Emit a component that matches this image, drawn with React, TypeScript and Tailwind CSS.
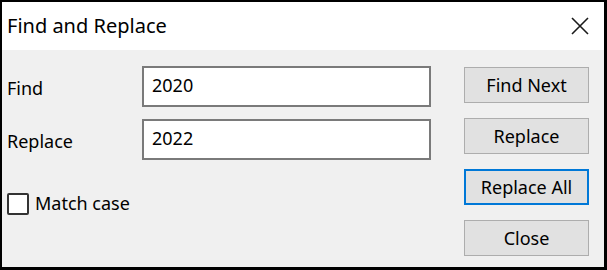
import React, { useState } from 'react';

const font = { fontFamily: '"Noto Sans", "Open Sans", sans-serif' };

const DialogButton: React.FC<{ label: string; active?: boolean }> = ({ label, active }) => (
  <button
    className={`h-[36px] w-[125px] bg-[#e1e1e1] text-[18px] text-black leading-none ${
      active ? 'border-2 border-[#0078d7]' : 'border border-[#adadad]'
    }`}
  >
    {label}
  </button>
);

export default function App() {
  const [find, setFind] = useState('2020');
  const [replace, setReplace] = useState('2022');
  const [matchCase, setMatchCase] = useState(false);

  return (
    <div
      className="w-[607px] h-[270px] flex flex-col border-t-2 border-l-2 border-r-[3px] border-b-[3px] border-black bg-[#f0f0f0] text-black"
      style={font}
    >
      {/* Title bar */}
      <div className="h-[48px] bg-white flex items-center justify-between pl-[5px] pr-[14px]">
        <span className="text-[20px]">Find and Replace</span>
        <svg width="18" height="18" viewBox="0 0 18 18" className="mr-[1px]">
          <path d="M1 1 L17 17 M17 1 L1 17" stroke="#1a1a1a" strokeWidth="1.6" />
        </svg>
      </div>

      {/* Body */}
      <div className="flex-1 flex">
        <div className="pl-[5px] pt-[16px] flex flex-col">
          <div className="flex items-center h-[41px]">
            <label className="w-[135px] text-[18px] pt-[4px]">Find</label>
            <input
              value={find}
              onChange={e => setFind(e.target.value)}
              className="w-[289px] h-[41px] bg-white border-2 border-[#7a7a7a] px-[8px] pb-[4px] text-[18px] outline-none"
              style={font}
            />
          </div>
          <div className="flex items-center h-[41px] mt-[12px]">
            <label className="w-[135px] text-[18px] pt-[4px]">Replace</label>
            <input
              value={replace}
              onChange={e => setReplace(e.target.value)}
              className="w-[289px] h-[41px] bg-white border-2 border-[#7a7a7a] px-[8px] pb-[4px] text-[18px] outline-none"
              style={font}
            />
          </div>
          <label className="flex items-center mt-[30px] gap-[6px] cursor-pointer">
            <span
              onClick={() => setMatchCase(!matchCase)}
              className="w-[22px] h-[22px] border-2 border-[#333] rounded-[2px] bg-white flex items-center justify-center text-[14px]"
            >
              {matchCase ? '✓' : ''}
            </span>
            <span className="text-[18px]">Match case</span>
          </label>
        </div>

        <div className="ml-[33px] pt-[17px] flex flex-col gap-[15px]">
          <DialogButton label="Find Next" />
          <DialogButton label="Replace" />
          <DialogButton label="Replace All" active />
          <DialogButton label="Close" />
        </div>
      </div>
    </div>
  );
}
